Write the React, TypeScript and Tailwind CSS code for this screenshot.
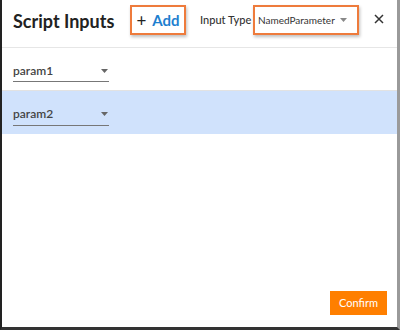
import React from 'react';

function Caret({ color = 'fill-[#666]' }: { color?: string }) {
  return (
    <svg width="7" height="4" viewBox="0 0 7 4" className={`${color} shrink-0`}>
      <path d="M0 0h7L3.5 4z" />
    </svg>
  );
}

function ParamSelect({ label }: { label: string }) {
  return (
    <div className="w-[96px] h-[22px] flex items-center justify-between border-b border-[#777] pr-[1px]">
      <span className="text-[12px] text-[#444] font-semibold">{label}</span>
      <Caret />
    </div>
  );
}

export default function App() {
  const params = ['param1', 'param2'];
  return (
    <div
      className="w-[400px] h-[330px] bg-white border-l-2 border-b-[3px] border-r-[3px] border-l-[#222] border-b-[#333] border-r-[#9a9a9a] flex flex-col"
      style={{ fontFamily: 'Lato, "Open Sans", sans-serif' }}
    >
      <header className="h-[48px] flex items-start border-b border-[#e6e6e6] pl-[11px] shrink-0 whitespace-nowrap">
        <h1 className="mt-[10px] text-[18px] leading-[22px] font-bold text-[#222] w-[117px] shrink-0">Script Inputs</h1>
        <div className="mt-[5px] w-[56px] h-[30px] shrink-0 border-2 border-[#ee7b3c] shadow-[1px_2px_3px_rgba(0,0,0,0.25)] flex items-center justify-center gap-[6px] text-[15px] font-bold">
          <span className="text-[#222] font-normal text-[17px] leading-none">+</span>
          <span className="text-[#1e7fcf]">Add</span>
        </div>
        <span className="mt-[12px] ml-[14px] w-[47px] text-[11px] leading-[15px] text-[#333] font-medium shrink-0">Input Type</span>
        <div className="mt-[5px] ml-[6px] w-[106px] h-[30px] shrink-0 border-2 border-[#ee7b3c] shadow-[1px_2px_3px_rgba(0,0,0,0.25)] flex items-center justify-between pl-[3px] pr-[10px]">
          <span className="text-[10px] text-[#333]">NamedParameter</span>
          <Caret color="fill-[#888]" />
        </div>
        <button className="mt-[11px] ml-[12px] w-[16px] h-[16px] flex items-center justify-center shrink-0">
          <svg width="10" height="10" viewBox="0 0 10 10" className="stroke-[#333]" strokeWidth="1.5">
            <path d="M1 1l8 8M9 1l-8 8" />
          </svg>
        </button>
      </header>
      <div className="flex flex-col">
        {params.map((p, i) => (
          <div
            key={p}
            className={`h-[43px] flex items-center pl-[11px] pt-[4px] ${i === 1 ? 'bg-[#d0e2fc]' : 'border-b border-[#e2e2e2]'}`}
          >
            <ParamSelect label={p} />
          </div>
        ))}
      </div>
      <div className="flex-1" />
      <div className="flex justify-end pr-[10px] pb-[12px]">
        <button className="w-[57px] h-[24px] bg-[#ff7f00] text-white text-[11px]">Confirm</button>
      </div>
    </div>
  );
}
